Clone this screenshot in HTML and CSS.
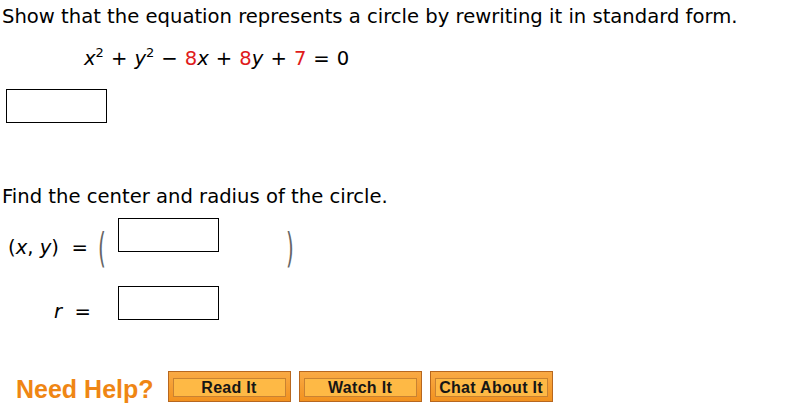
FILE: index.html
```html
<!DOCTYPE html>
<html>
<head>
<meta charset="utf-8">
<link rel="stylesheet" href="styles.css">
</head>
<body>
<div class="page">
  <p class="prompt">Show that the equation represents a circle by rewriting it in standard form.</p>
  <p class="eq"><i>x</i><sup>2</sup> + <i>y</i><sup>2</sup> &minus; <span class="red">8</span><i>x</i> + <span class="red">8</span><i>y</i> + <span class="red">7</span> = 0</p>
  <div class="box box-first"></div>
  <p class="prompt prompt-2">Find the center and radius of the circle.</p>
  <div class="row row-center">
    <span class="label label-xy">(<i>x</i>, <i>y</i>) &nbsp;=</span>
    <span class="paren paren-l">(</span>
    <div class="box"></div>
    <span class="paren paren-r">)</span>
  </div>
  <div class="row row-r">
    <span class="label label-r"><i>r</i> &nbsp;=</span>
    <div class="box"></div>
  </div>
  <div class="help">
    <span class="need">Need Help?</span>
    <span class="btn"><span class="btn-in">Read It</span></span>
    <span class="btn"><span class="btn-in">Watch It</span></span>
    <span class="btn"><span class="btn-in">Chat About It</span></span>
  </div>
</div>
</body>
</html>
```
FILE: styles.css
```css
html, body { margin: 0; padding: 0; background: #fff; }
.page {
  font-family: "DejaVu Sans", Verdana, sans-serif;
  font-size: 19.6px;
  color: #000;
  padding-left: 2px;
}
.prompt { margin: 0; padding-top: 4px; line-height: 26px; }
.eq { margin: 16px 0 0 82px; line-height: 26px; word-spacing: 0.8px; }
.eq i, .label i { font-style: italic; }
.eq sup { font-size: 13px; vertical-align: 8px; line-height: 0; }
.red { color: #e01b1b; }
.box {
  width: 99px;
  height: 32px;
  border: 1px solid #000;
  background: #fff;
  box-sizing: content-box;
  flex: none;
}
.box-first { margin: 17px 0 0 4px; }
.prompt-2 { margin-top: 57px; }
.row { display: flex; align-items: flex-start; }
.row-center { margin-top: 8px; height: 52px; }
.label { line-height: 26px; flex: none; }
.label-xy { margin: 17px 0 0 6px; width: 90px; }
.paren {
  font-size: 40px;
  font-weight: normal;
  color: #666;
  line-height: 40px;
  display: inline-block;
  transform: scaleX(0.5);
  transform-origin: left center;
  flex: none;
}
.paren-l { margin-top: 10px; width: 20px; }
.paren-r { margin: 10px 0 0 67px; }
.row-r { margin-top: 16px; }
.label-r { margin: 13px 0 0 52px; width: 64px; }
.help {
  display: flex;
  align-items: flex-start;
  margin-top: 46px;
  padding-left: 14px;
}
.need {
  font-family: "Liberation Sans", Arial, sans-serif;
  color: #ef8614;
  font-weight: bold;
  font-size: 25px;
  margin: 4px 14px 0 0;
}
.btn {
  display: inline-block;
  width: 123px;
  height: 31px;
  box-sizing: border-box;
  border: 1px solid #b7671f;
  background: linear-gradient(#f9aa45, #f2921f);
  padding: 6px 4px 4px 4px;
  margin-right: 8px;
}
.btn-in {
  display: block;
  height: 19px;
  box-sizing: border-box;
  border: 1px solid #c98232;
  background: #feb945;
  font-family: "Liberation Sans", Arial, sans-serif;
  font-size: 16px;
  letter-spacing: 0.3px;
  font-weight: bold;
  color: #161616;
  text-align: center;
  line-height: 17px;
  padding-top: 0;
  white-space: nowrap;
}
```
